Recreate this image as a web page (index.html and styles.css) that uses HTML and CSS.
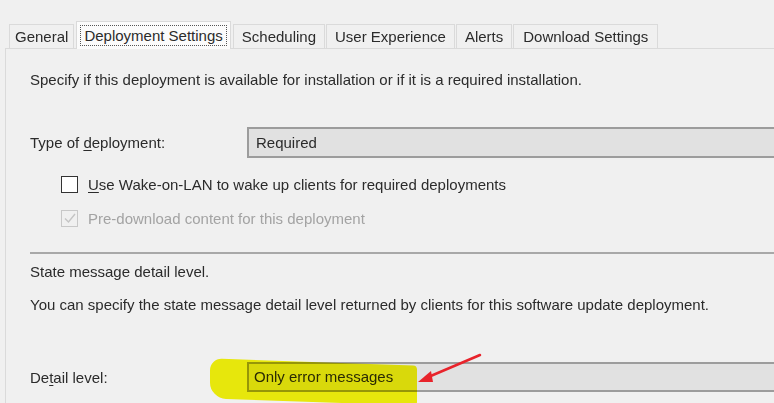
FILE: index.html
```html
<!DOCTYPE html>
<html lang="en">
<head>
    <meta charset="UTF-8">
    <title>Deployment Settings</title>
    <link rel="stylesheet" href="styles.css">
</head>
<body>
    <div class="tabs">
        <div class="tab">General</div>
        <div class="tab active"><span class="focus">Deployment Settings</span></div>
        <div class="tab">Scheduling</div>
        <div class="tab">User Experience</div>
        <div class="tab">Alerts</div>
        <div class="tab">Download Settings</div>
    </div>

    <div class="panel">
        <p class="intro">Specify if this deployment is available for installation or if it is a required installation.</p>

        <div class="field type-row">
            <label class="label">Type of <u>d</u>eployment:</label>
            <div class="combo">Required</div>
        </div>

        <div class="check-row">
            <span class="box"></span>
            <span><u>U</u>se Wake-on-LAN to wake up clients for required deployments</span>
        </div>
        <div class="check-row disabled">
            <span class="box">
                <svg width="14" height="14" viewBox="0 0 14 14"><path d="M2 7.5 L5.5 11 L12 3" fill="none" stroke="#c4c4c4" stroke-width="1.4"/></svg>
            </span>
            <span>Pre-download content for this deployment</span>
        </div>

        <hr class="sep">

        <p class="state">State message detail level.</p>
        <p class="hint">You can specify the state message detail level returned by clients for this software update deployment.</p>

        <div class="field detail-row">
            <label class="label">De<u>t</u>ail level:</label>
            <div class="combo">Only error messages</div>
        </div>
    </div>

    <!-- annotations drawn over the screenshot -->
    <div class="marker"></div>
    <svg class="arrow" width="70" height="40" viewBox="0 0 70 40">
        <line x1="66" y1="3" x2="12" y2="26" stroke="#e8232b" stroke-width="2.5" stroke-linecap="round"/>
        <path d="M4 30 L17 19 L19 30 Z" fill="#e8232b"/>
    </svg>
</body>
</html>
```

FILE: styles.css
```css
body {
    margin: 0;
    background-color: #f0f0f0;
    color: #2b2b2b;
    font-family: 'Liberation Sans', Arial, sans-serif;
    font-size: 15px;
    width: 774px;
    height: 403px;
    overflow: hidden;
    position: relative;
}

u {
    text-decoration-thickness: 1px;
    text-underline-offset: 2px;
}

.tabs {
    display: flex;
    align-items: flex-end;
    height: 48px;
    padding-left: 9px;
}

.tab {
    height: 23px;
    line-height: 23px;
    padding: 0 8px;
    border: 1px solid #dadada;
    border-bottom: none;
    margin-right: 1px;
    background-color: #f0f0f0;
}

.tab:first-child {
    padding: 0 5px;
}

.tab:last-child {
    padding: 0 9px;
}

.tab.active {
    height: 27px;
    line-height: 27px;
    margin: 0 2px -1px 1px;
    padding: 0 3px;
    background-color: #fbfbfb;
    position: relative;
    z-index: 1;
}

.focus {
    border: 1px dotted #555;
    padding: 1px 3px;
}

.panel {
    margin-left: 5px;
    border-top: 1px solid #dadada;
    border-left: 1px solid #dadada;
    padding: 22px 0 20px 24px;
}

.intro, .state, .hint {
    margin: 0;
    line-height: 18px;
}

.field {
    display: flex;
    align-items: center;
}

.label {
    width: 217px;
    flex-shrink: 0;
}

.combo {
    flex: 1;
    height: 27px;
    line-height: 27px;
    margin-right: -10px;
    padding-left: 7px;
    background-color: #e1e1e1;
    border: 2px solid #9c9c9c;
    border-right: none;
}

.type-row {
    margin-top: 38px;
}

.check-row {
    display: flex;
    align-items: center;
    height: 34px;
    padding-left: 31px;
}

.type-row + .check-row {
    margin-top: 9px;
}

.box {
    width: 15px;
    height: 15px;
    border: 1.5px solid #333;
    background-color: #fff;
    margin-right: 10px;
    display: flex;
    align-items: center;
    justify-content: center;
}

.check-row.disabled {
    color: #a3a3a3;
}

.check-row.disabled .box {
    border-color: #c8c8c8;
    background-color: #f0f0f0;
}

.sep {
    margin: 17px 0 0 0;
    border: none;
    border-top: 2px solid #a8a8a8;
    height: 0;
}

.state {
    margin-top: 9px;
}

.hint {
    margin-top: 15px;
}

.detail-row {
    margin-top: 48px;
}

.detail-row .combo {
    height: 26px;
    line-height: 26px;
    padding-left: 5px;
}

.marker {
    position: absolute;
    left: 210px;
    top: 362px;
    width: 207px;
    height: 40px;
    background-color: #f6f60c;
    mix-blend-mode: multiply;
    border-radius: 12px 4px 4px 16px;
    transform: skewY(2deg);
}

.arrow {
    position: absolute;
    left: 414px;
    top: 352px;
}
```
